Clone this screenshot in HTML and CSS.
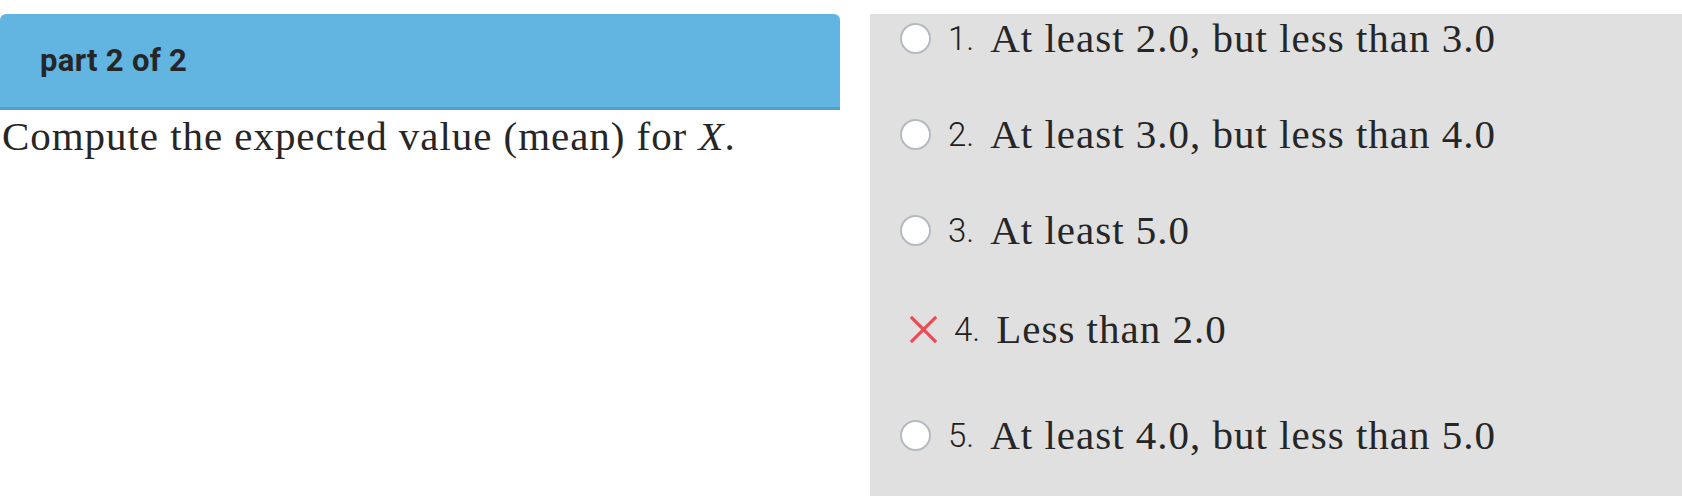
FILE: index.html
```html
<!DOCTYPE html>
<html>
<head>
<meta charset="utf-8">
<link rel="stylesheet" href="styles.css">
</head>
<body>
<div class="page">
  <div class="left">
    <div class="part-header">part 2 of 2</div>
    <p class="question">Compute the expected value (mean) for <i>X</i>.</p>
  </div>
  <div class="choices">
    <div class="choice">
      <span class="radio"></span>
      <span class="num">1.</span>
      <span class="label">At least 2.0, but less than 3.0</span>
    </div>
    <div class="choice">
      <span class="radio"></span>
      <span class="num">2.</span>
      <span class="label">At least 3.0, but less than 4.0</span>
    </div>
    <div class="choice">
      <span class="radio"></span>
      <span class="num">3.</span>
      <span class="label">At least 5.0</span>
    </div>
    <div class="choice wrong">
      <svg class="cross" viewBox="0 0 28 28" width="28" height="28"><path d="M2 2 L26 26 M26 2 L2 26" stroke="#ea4a52" stroke-width="3.2" stroke-linecap="square" fill="none"/></svg>
      <span class="num">4.</span>
      <span class="label">Less than 2.0</span>
    </div>
    <div class="choice">
      <span class="radio"></span>
      <span class="num">5.</span>
      <span class="label">At least 4.0, but less than 5.0</span>
    </div>
  </div>
</div>
</body>
</html>
```
FILE: styles.css
```css
html, body {
  margin: 0;
  padding: 0;
  background: #ffffff;
}
.page {
  display: flex;
  gap: 30px;
  height: 496px;
  overflow: hidden;
}
.left {
  width: 840px;
  flex: none;
  padding-top: 14px;
}
.part-header {
  height: 93px;
  border-bottom: 3px solid #519fcc;
  background: #62b4e1;
  border-radius: 6px 6px 0 0;
  display: flex;
  align-items: center;
  padding-left: 40px;
  font-family: Roboto, "Liberation Sans", sans-serif;
  font-weight: 700;
  font-size: 31px;
  letter-spacing: 0.3px;
  color: #242628;
  box-sizing: content-box;
}
.question {
  margin: 0;
  padding-left: 2px;
  font-family: "Liberation Serif", serif;
  font-size: 41px;
  letter-spacing: 0.95px;
  line-height: 52px;
  color: #262626;
}
.question i {
  font-style: italic;
}
.choices {
  flex: 1;
  margin-top: 14px;
  background: #e0e0e0;
  padding-left: 30px;
  display: flex;
  flex-direction: column;
  gap: 48px;
}
.choice {
  height: 48px;
  display: flex;
  align-items: center;
}
.choice.wrong {
  margin-top: 3px;
  margin-bottom: 10px;
}
.radio {
  width: 27px;
  height: 27px;
  border: 2px solid #b5bac2;
  border-radius: 50%;
  background: #ffffff;
  flex: none;
}
.cross {
  flex: none;
  margin-left: 10px;
  width: 27px;
  height: 27px;
}
.num {
  margin-left: 17px;
  font-family: Roboto, "Liberation Sans", sans-serif;
  font-weight: 300;
  font-size: 33px;
  color: #1e1e1e;
}
.label {
  margin-left: 16px;
  font-family: "Liberation Serif", serif;
  font-size: 41px;
  letter-spacing: 1px;
  color: #262626;
}
```
